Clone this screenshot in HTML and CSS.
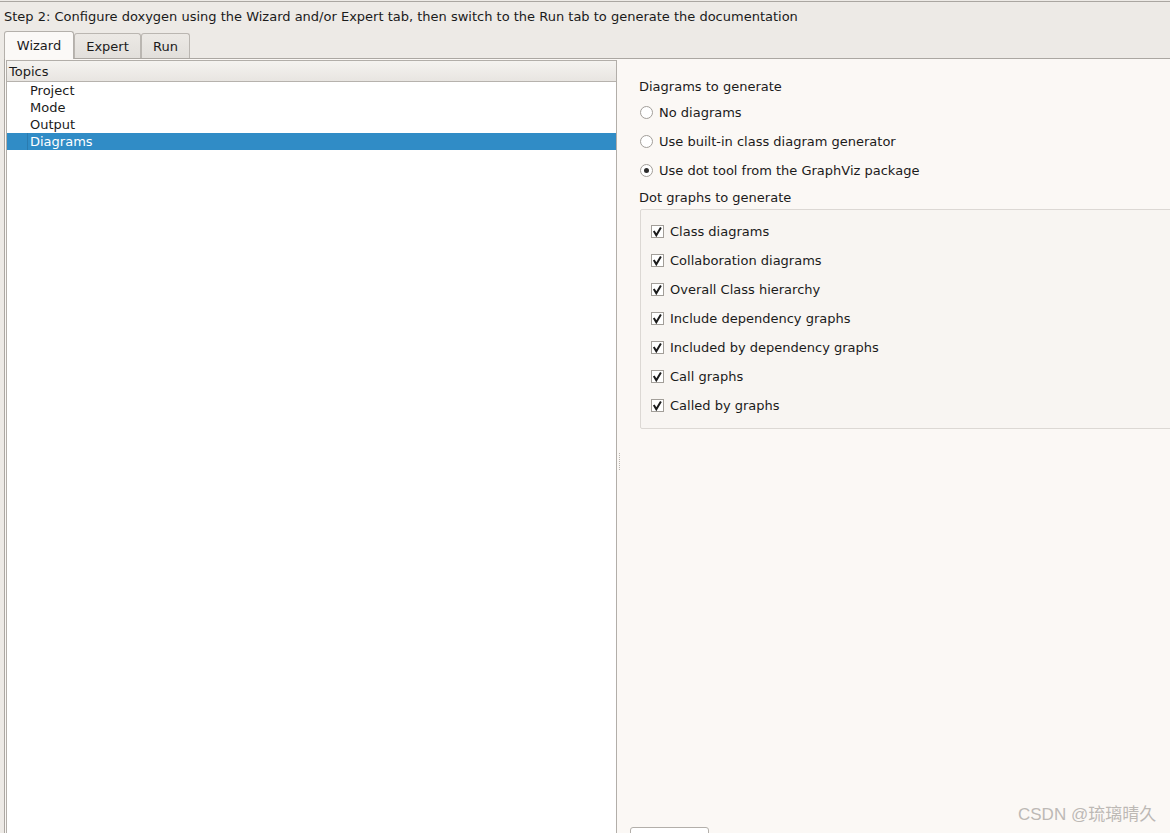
FILE: index.html
```html
<!DOCTYPE html>
<html>
<head>
<meta charset="utf-8">
<link rel="stylesheet" href="styles.css">
</head>
<body>
<div class="window">
  <div class="step">Step 2: Configure doxygen using the Wizard and/or Expert tab, then switch to the Run tab to generate the documentation</div>
  <div class="tabs">
    <div class="tab active tab-wizard">Wizard</div>
    <div class="tab tab-expert">Expert</div>
    <div class="tab tab-run">Run</div>
  </div>
  <div class="pane">
    <div class="tree">
      <div class="tree-header">Topics</div>
      <div class="tree-row">Project</div>
      <div class="tree-row">Mode</div>
      <div class="tree-row">Output</div>
      <div class="tree-row selected"><span class="focus">Diagrams</span></div>
    </div>
    <div class="splitter"><div class="grip"></div></div>
    <div class="right">
      <div class="label first">Diagrams to generate</div>
      <div class="opt"><span class="radio"></span>No diagrams</div>
      <div class="opt"><span class="radio"></span>Use built-in class diagram generator</div>
      <div class="opt"><span class="radio checked"></span>Use dot tool from the GraphViz package</div>
      <div class="label second">Dot graphs to generate</div>
      <div class="group">
        <div class="opt"><span class="check"><svg viewBox="0 0 13 13" width="13" height="13"><path d="M2.8 6 L5.3 10.2 L9.9 2.4" fill="none" stroke="#1a1a1a" stroke-width="2"/></svg></span>Class diagrams</div>
        <div class="opt"><span class="check"><svg viewBox="0 0 13 13" width="13" height="13"><path d="M2.8 6 L5.3 10.2 L9.9 2.4" fill="none" stroke="#1a1a1a" stroke-width="2"/></svg></span>Collaboration diagrams</div>
        <div class="opt"><span class="check"><svg viewBox="0 0 13 13" width="13" height="13"><path d="M2.8 6 L5.3 10.2 L9.9 2.4" fill="none" stroke="#1a1a1a" stroke-width="2"/></svg></span>Overall Class hierarchy</div>
        <div class="opt"><span class="check"><svg viewBox="0 0 13 13" width="13" height="13"><path d="M2.8 6 L5.3 10.2 L9.9 2.4" fill="none" stroke="#1a1a1a" stroke-width="2"/></svg></span>Include dependency graphs</div>
        <div class="opt"><span class="check"><svg viewBox="0 0 13 13" width="13" height="13"><path d="M2.8 6 L5.3 10.2 L9.9 2.4" fill="none" stroke="#1a1a1a" stroke-width="2"/></svg></span>Included by dependency graphs</div>
        <div class="opt"><span class="check"><svg viewBox="0 0 13 13" width="13" height="13"><path d="M2.8 6 L5.3 10.2 L9.9 2.4" fill="none" stroke="#1a1a1a" stroke-width="2"/></svg></span>Call graphs</div>
        <div class="opt"><span class="check"><svg viewBox="0 0 13 13" width="13" height="13"><path d="M2.8 6 L5.3 10.2 L9.9 2.4" fill="none" stroke="#1a1a1a" stroke-width="2"/></svg></span>Called by graphs</div>
      </div>
      <div class="button"></div>
    </div>
  </div>
  <div class="watermark">CSDN @琉璃晴久</div>
</div>
</body>
</html>
```
FILE: styles.css
```css
html, body {
  margin: 0;
  padding: 0;
  height: 833px;
  overflow: hidden;
}
body {
  background: #edeae6;
  font-family: "DejaVu Sans", "Noto Sans CJK SC", sans-serif;
  font-size: 13px;
  color: #1b1b1b;
}
.window {
  position: relative;
  margin-top: 1px;
  border-top: 1px solid #aaa6a1;
  height: 831px;
}
.step {
  padding: 7px 0 0 4px;
  height: 29px;
  line-height: 16px;
  box-sizing: border-box;
  color: #1b1b1b;
}
.tabs {
  display: flex;
  align-items: flex-end;
  padding-left: 4px;
  height: 27px;
  box-sizing: border-box;
  position: relative;
  z-index: 2;
}
.tab {
  box-sizing: border-box;
  height: 25px;
  border: 1px solid #bab6b1;
  border-bottom: none;
  border-radius: 3px 3px 0 0;
  background: linear-gradient(#ece9e5, #e2dfdb);
  text-align: center;
  line-height: 25px;
}
.tab.active {
  height: 28px;
  margin-bottom: -1px;
  background: #fbf9f7;
  line-height: 27px;
  border-color: #b4b0ab;
}
.tab-wizard { width: 70px; }
.tab-expert { width: 67px; }
.tab-run { width: 49px; }
.pane {
  display: flex;
  border-top: 1px solid #aba7a2;
  background: #fbf8f5;
  height: 800px;
  margin-left: 4px;
  border-left: 1px solid #aba7a2;
}
.tree {
  width: 611px;
  margin: 1px 0 0 1px;
  border: 1px solid #b2aea9;
  background: #ffffff;
  box-sizing: border-box;
  flex: none;
}
.tree-header {
  height: 21px;
  line-height: 21px;
  padding-left: 2px;
  background: linear-gradient(#f5f3f0, #e8e5e1);
  border-bottom: 1px solid #b6b2ad;
  box-sizing: border-box;
}
.tree-row {
  height: 17px;
  line-height: 17px;
  padding-left: 23px;
}
.tree-row.selected {
  background: #308cc6;
  color: #ffffff;
  height: 17px;
  padding-left: 20px;
}
.focus {
  display: inline-block;
  border-left: 1px solid #2a7bb0;
  padding-left: 2px;
  height: 17px;
}
.splitter {
  width: 5px;
  flex: none;
  padding-top: 394px;
  box-sizing: border-box;
}
.grip {
  margin-left: 2px;
  width: 1px;
  height: 17px;
  background: repeating-linear-gradient(#b8b4af 0 1px, transparent 1px 2px);
}
.right {
  flex: 1;
  padding-left: 17px;
  margin-right: -20px;
}
.label {
  height: 16px;
  line-height: 16px;
}
.label.first { margin-top: 20px; margin-bottom: 3px; }
.label.second { margin-top: 5px; margin-bottom: 3px; }
.opt {
  display: flex;
  align-items: center;
  height: 29px;
  padding-left: 1px;
}
.radio {
  width: 13px;
  height: 13px;
  box-sizing: border-box;
  border: 1px solid #a29e99;
  border-radius: 50%;
  background: #ffffff;
  margin-right: 6px;
  display: flex;
  align-items: center;
  justify-content: center;
}
.radio.checked::after {
  content: "";
  width: 5px;
  height: 5px;
  border-radius: 50%;
  background: #2c2c2c;
}
.group {
  margin-left: 1px;
  border: 1px solid #dcd8d4;
  border-radius: 2px;
  background: #f8f5f2;
  padding: 7px 0 8px 10px;
}
.group .opt { padding-left: 0; }
.check {
  width: 13px;
  height: 13px;
  box-sizing: border-box;
  border: 1px solid #a29e99;
  background: #ffffff;
  margin-right: 6px;
  display: flex;
  align-items: center;
  justify-content: center;
}
.check svg {
  flex: none;
}
.button {
  margin: 398px 0 0 -9px;
  width: 79px;
  height: 30px;
  border: 1px solid #b3afaa;
  border-radius: 3px;
  background: #ffffff;
  box-sizing: border-box;
}
.watermark {
  position: absolute;
  left: 1018px;
  top: 801px;
  font-family: "Liberation Sans", "Noto Sans CJK SC", sans-serif;
  font-size: 17px;
  color: #bdb9b5;
  line-height: 24px;
  white-space: nowrap;
}
```
